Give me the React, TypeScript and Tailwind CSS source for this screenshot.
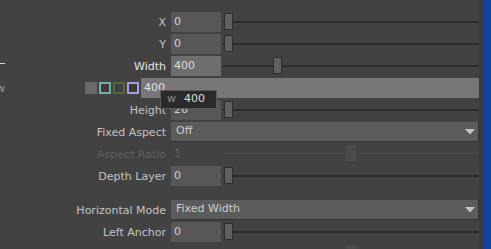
import React from 'react';

const font = { fontFamily: "'DejaVu Sans', sans-serif" };

function Label({ text, dim, bright }: { text: string; dim?: boolean; bright?: boolean }) {
  return (
    <div
      className={`w-[166px] shrink-0 text-right text-[11px] leading-none ${
        dim ? 'text-[#5f5f5f]' : bright ? 'text-[#e4e4e4]' : 'text-[#c4c4c4]'
      }`}
    >
      {text}
    </div>
  );
}

function Slider({ at, dim }: { at: number; dim?: boolean }) {
  return (
    <div className="relative ml-[2px] h-[20px] flex-1">
      <div className={`absolute inset-x-0 top-[9px] ${dim ? 'h-px bg-[#4d4d4d]' : 'h-[2px] bg-[#2d2d2d]'}`} />
      {dim ? (
        <div className="absolute top-[1px] h-[16px] w-[10px] bg-[#4b4b4b]" style={{ left: at }} />
      ) : (
        <div
          className="absolute top-[1px] h-[17px] w-[9px] border border-[#2e2e2e] bg-[#606060]"
          style={{ left: at }}
        />
      )}
    </div>
  );
}

function NumRow({ label, value, at = 1, light, dim }: { label: string; value: string; at?: number; light?: boolean; dim?: boolean }) {
  return (
    <div className="flex h-[22px] items-center">
      <Label text={label} dim={dim} bright={light} />
      <div
        className={`ml-[5px] flex h-[20px] w-[50px] shrink-0 items-center pl-[3px] text-[11px] ${
          dim ? 'text-[#5f5f5f]' : light ? 'bg-[#6e6e6e] text-[#dcdcdc]' : 'bg-[#575757] text-[#d0d0d0]'
        }`}
      >
        {value}
      </div>
      <Slider at={at} dim={dim} />
    </div>
  );
}

function Dropdown({ label, value }: { label: string; value: string }) {
  return (
    <div className="flex h-[22px] items-center">
      <Label text={label} />
      <div className="ml-[5px] flex h-[20px] flex-1 items-center justify-between border-b border-r border-[#333] bg-[#5b5b5b] pl-[5px] pr-[3px] text-[11px] text-[#cfcfcf]">
        <span>{value}</span>
        <svg width="10" height="6" viewBox="0 0 10 6">
          <path d="M0 0 H10 L5 5.5 Z" fill="#c4c4c4" />
        </svg>
      </div>
    </div>
  );
}

export default function App() {
  return (
    <div className="flex h-[249px] w-[491px] overflow-hidden bg-[#424242]" style={font}>
      <div className="relative flex w-[479px] shrink-0 flex-col pt-[5px]">
        <div className="h-px w-[478px] bg-[#e6e6e6]" />

        {/* clipped bits of the column to the left */}
        <div className="absolute left-0 top-[63px] h-px w-[5px] bg-[#d8d8d8]" />
        <div className="absolute left-[-4px] top-[83px] text-[11px] leading-none text-[#9a9a9a]">w</div>

        <div className="flex flex-col pt-[6px]">
          <NumRow label="X" value="0" />
          <NumRow label="Y" value="0" />
          <NumRow label="Width" value="400" at={50} light />

          {/* colour swatches + expanded edit field */}
          <div className="relative flex h-[22px] items-center">
            <div className="ml-[85px] flex gap-[2px]">
              <div className="h-[12px] w-[12px] bg-[#6a6a6a]" />
              <div className="h-[12px] w-[12px] border-2 border-[#79aeae] bg-[#3c3c3c]" />
              <div className="h-[12px] w-[12px] border-2 border-[#4c6b35] bg-[#404040]" />
              <div className="h-[12px] w-[12px] border-2 border-[#a9a0e2] bg-[#3c3c3c]" />
            </div>
            <div className="ml-[2px] flex h-[20px] flex-1 items-center bg-[#777] pl-[3px] text-[11px] text-[#e0e0e0]">
              400
            </div>
            <div className="absolute left-[160px] top-[13px] z-10 flex h-[19px] w-[57px] items-center gap-[8px] border border-[#5a5a5a] bg-[#2a2a2a] pl-[6px] text-[11px]">
              <span className="text-[#8a8a8a]">w</span>
              <span className="text-[#dedede]">400</span>
            </div>
          </div>

          <NumRow label="Height" value="26" />
          <Dropdown label="Fixed Aspect" value="Off" />
          <NumRow label="Aspect Ratio" value="1" at={123} dim />
          <NumRow label="Depth Layer" value="0" />
        </div>

        <div className="mt-[6px] h-px bg-[#565656]" />

        <div className="flex flex-col pt-[6px]">
          <Dropdown label="Horizontal Mode" value="Fixed Width" />
          <NumRow label="Left Anchor" value="0" />
          <NumRow label="Left Offset" value="0" at={123} dim />
        </div>
      </div>
      <div className="w-[4px] shrink-0 bg-[#3b3b3b]" />
      <div className="flex-1 bg-[#1241a6]" />
    </div>
  );
}
